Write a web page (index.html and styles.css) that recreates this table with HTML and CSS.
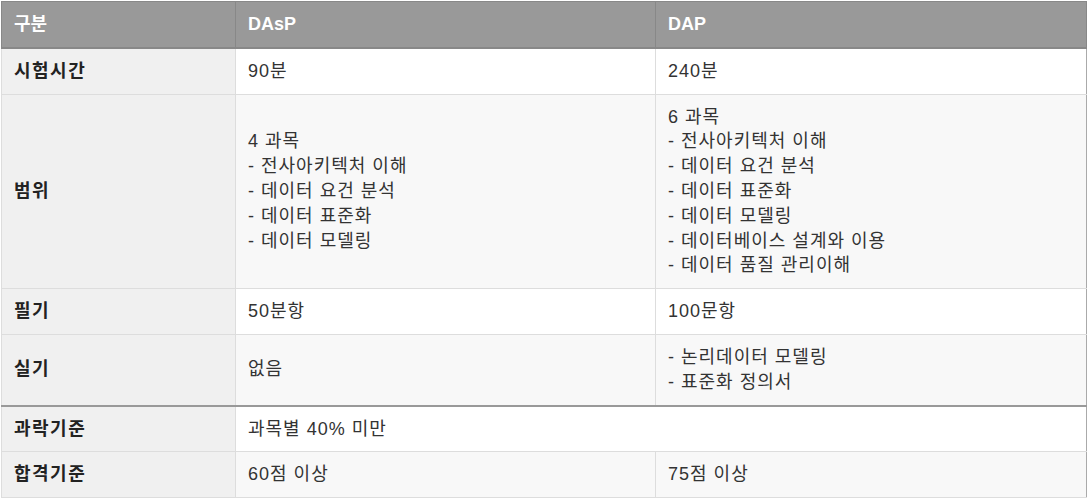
FILE: index.html
```html
<!DOCTYPE html>
<html lang="ko">
<head>
<meta charset="utf-8">
<link rel="stylesheet" href="styles.css">
</head>
<body>
<table class="cmp">
  <colgroup>
    <col class="c1"><col class="c2"><col class="c3">
  </colgroup>
  <thead>
    <tr><th>구분</th><th>DAsP</th><th>DAP</th></tr>
  </thead>
  <tbody>
    <tr><th>시험시간</th><td>90분</td><td>240분</td></tr>
    <tr class="alt"><th>범위</th>
      <td>4 과목<br>- 전사아키텍처 이해<br>- 데이터 요건 분석<br>- 데이터 표준화<br>- 데이터 모델링</td>
      <td>6 과목<br>- 전사아키텍처 이해<br>- 데이터 요건 분석<br>- 데이터 표준화<br>- 데이터 모델링<br>- 데이터베이스 설계와 이용<br>- 데이터 품질 관리이해</td>
    </tr>
    <tr><th>필기</th><td>50분항</td><td>100문항</td></tr>
    <tr class="alt"><th>실기</th><td>없음</td><td>- 논리데이터 모델링<br>- 표준화 정의서</td></tr>
  </tbody>
  <tbody class="crit">
    <tr><th>과락기준</th><td colspan="2">과목별 40% 미만</td></tr>
    <tr class="alt"><th>합격기준</th><td>60점 이상</td><td>75점 이상</td></tr>
  </tbody>
</table>
</body>
</html>
```
FILE: styles.css
```css
html, body {
  margin: 0;
  padding: 0;
  background: #fff;
}
body {
  padding: 1px 0 0 1px;
  font-family: "Liberation Sans", "Noto Sans CJK KR", sans-serif;
  font-size: 18px;
  color: #333;
}
.cmp {
  width: 1085px;
  border-collapse: collapse;
  table-layout: fixed;
}
.c1 { width: 234px; }
.c2 { width: 420px; }
.c3 { width: 431px; }
.cmp th, .cmp td {
  padding: 10px 12px;
  line-height: 24.8px;
  letter-spacing: 1px;
  text-align: left;
  vertical-align: middle;
  border: 1px solid #ddd;
}
.cmp thead th {
  background: #999;
  color: #fff;
  font-weight: bold;
  letter-spacing: 0;
  border: 1px solid #888;
  border-bottom: 2px solid #888;
}
.cmp tbody th {
  background: #f0f0f0;
  color: #222;
  font-weight: bold;
  letter-spacing: 1.5px;
}
.cmp tbody td {
  background: #fff;
}
.cmp tbody tr.alt td {
  background: #f8f8f8;
}
.cmp tbody td:last-child {
  border-right: 1px solid #aaa;
}
.cmp tbody.crit tr:first-child th,
.cmp tbody.crit tr:first-child td {
  border-top: 2px solid #999;
}
```
